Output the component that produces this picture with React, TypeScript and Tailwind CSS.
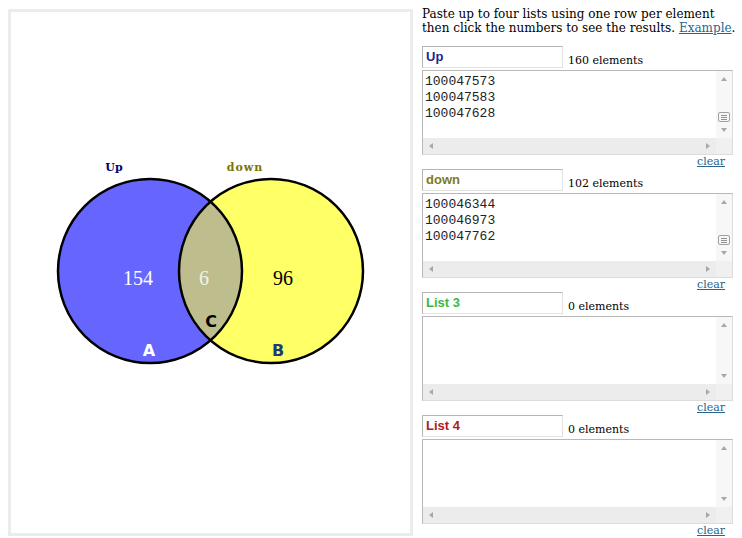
import React from 'react';

type ListBox = {
  name: string;
  color: string;
  count: number;
  rows: string[];
};

const LISTS: ListBox[] = [
  { name: 'Up', color: '#24248c', count: 160, rows: ['100047573', '100047583', '100047628'] },
  { name: 'down', color: '#7f7a22', count: 102, rows: ['100046344', '100046973', '100047762'] },
  { name: 'List 3', color: '#3cb93c', count: 0, rows: [] },
  { name: 'List 4', color: '#b01c1c', count: 0, rows: [] },
];

const serif = { fontFamily: '"DejaVu Serif", serif' };

function Arrow({ dir }: { dir: 'up' | 'down' | 'left' | 'right' }) {
  const pts = {
    up: '0,4 3,0 6,4',
    down: '0,0 3,4 6,0',
    left: '4,0 0,3 4,6',
    right: '0,0 4,3 0,6',
  }[dir];
  const vertical = dir === 'up' || dir === 'down';
  return (
    <svg width={vertical ? 6 : 4} height={vertical ? 4 : 6} className="block">
      <polygon points={pts} fill="#a8a8a8" />
    </svg>
  );
}

function FakeTextarea({ rows }: { rows: string[] }) {
  const hasContent = rows.length > 0;
  return (
    <div className="w-[311px] h-[85px] border border-[#b8b8b8] border-b-[#dcdcdc] border-r-[#dcdcdc] flex flex-col bg-white">
      <div className="flex flex-1">
        <div
          className="flex-1 pl-[2px] pt-[3px] text-[13px] leading-[16px] text-[#222]"
          style={{ fontFamily: '"Liberation Mono", monospace' }}
        >
          {rows.map((r) => (
            <div key={r}>{r}</div>
          ))}
        </div>
        <div className="w-[16px] bg-[#f7f7f7] flex flex-col items-center justify-between pt-[6px] pb-[6px]">
          <Arrow dir="up" />
          {hasContent && (
            <div className="mt-auto mb-[6px] w-[12px] h-[10px] border border-[#a0a0a0] rounded-[2px] flex flex-col justify-center gap-[1px] px-[2px]">
              <div className="h-px bg-[#909090]" />
              <div className="h-px bg-[#909090]" />
              <div className="h-px bg-[#909090]" />
            </div>
          )}
          <Arrow dir="down" />
        </div>
      </div>
      <div className="h-[16px] flex">
        <div className="flex-1 bg-[#ececec] flex items-center justify-between px-[6px]">
          <Arrow dir="left" />
          <Arrow dir="right" />
        </div>
        <div className="w-[16px] bg-[#f0f0f0]" />
      </div>
    </div>
  );
}

function ListSection({ list }: { list: ListBox }) {
  return (
    <div className="w-[311px] flex flex-col">
      <div className="flex items-end h-[22px]">
        <div className="w-[141px] h-[22px] border border-[#b5b5b5] border-b-[#e2e2e2] border-r-[#e2e2e2] flex items-center pl-[3px]">
          <span
            className="text-[13px] font-bold"
            style={{ color: list.color, fontFamily: '"Liberation Sans", Arial, sans-serif' }}
          >
            {list.name}
          </span>
        </div>
        <span className="ml-[5px] text-[11px] leading-[14px] text-black" style={serif}>
          {list.count} elements
        </span>
      </div>
      <div className="mt-[2px]">
        <FakeTextarea rows={list.rows} />
      </div>
      <div className="h-[14px] flex justify-end pr-[8px]">
        <a className="text-[11px] leading-[14px] underline text-[#26658f]" style={serif} href="#">
          clear
        </a>
      </div>
    </div>
  );
}

function Venn() {
  return (
    <svg width={399} height={521} viewBox="11 12 399 521" className="block">
      <circle cx={150} cy={271} r={92} fill="#6666ff" />
      <circle cx={271} cy={271} r={92} fill="#ffff66" />
      <path d="M 210.5 201.7 A 92 92 0 0 1 210.5 340.3 A 92 92 0 0 1 210.5 201.7 Z" fill="#bdbd8d" />
      <circle cx={150} cy={271} r={92} fill="none" stroke="#000" strokeWidth={2.5} />
      <circle cx={271} cy={271} r={92} fill="none" stroke="#000" strokeWidth={2.5} />
      <text x={114} y={171} textAnchor="middle" fontSize={11} fontWeight="bold" fill="#00007a" fontFamily="DejaVu Serif, serif">
        Up
      </text>
      <text x={245} y={171} textAnchor="middle" fontSize={11} fontWeight="bold" fill="#7a7400" fontFamily="DejaVu Serif, serif" letterSpacing={1}>
        down
      </text>
      <text x={138} y={285} textAnchor="middle" fontSize={20} fill="#ffffff" fontFamily="Liberation Serif, serif">
        154
      </text>
      <text x={204} y={285} textAnchor="middle" fontSize={20} fill="#f2f2e6" fontFamily="Liberation Serif, serif">
        6
      </text>
      <text x={283} y={285} textAnchor="middle" fontSize={20} fill="#000" fontFamily="Liberation Serif, serif">
        96
      </text>
      <text x={211} y={327} textAnchor="middle" fontSize={16} fontWeight="bold" fill="#000" fontFamily="DejaVu Sans, sans-serif">
        C
      </text>
      <text x={149} y={356} textAnchor="middle" fontSize={16} fontWeight="bold" fill="#ffffff" fontFamily="DejaVu Sans, sans-serif">
        A
      </text>
      <text x={278} y={356} textAnchor="middle" fontSize={16} fontWeight="bold" fill="#1c3a78" fontFamily="DejaVu Sans, sans-serif">
        B
      </text>
    </svg>
  );
}

export default function App() {
  return (
    <div className="w-[742px] h-[538px] bg-white flex overflow-hidden">
      <div className="ml-[8px] mt-[9px] w-[405px] h-[527px] border-[3px] border-[#ececec]">
        <Venn />
      </div>
      <div className="ml-[9px] pt-[7px] w-[320px] flex flex-col">
        <p className="text-[12px] leading-[14px] text-black whitespace-nowrap" style={serif}>
          Paste up to four lists using one row per element
          <br />
          then click the numbers to see the results.{' '}
          <a href="#" className="underline text-[#26658f]">Example</a>.
        </p>
        <div className="mt-[11px] flex flex-col">
          {LISTS.map((l) => (
            <ListSection key={l.name} list={l} />
          ))}
        </div>
      </div>
    </div>
  );
}
